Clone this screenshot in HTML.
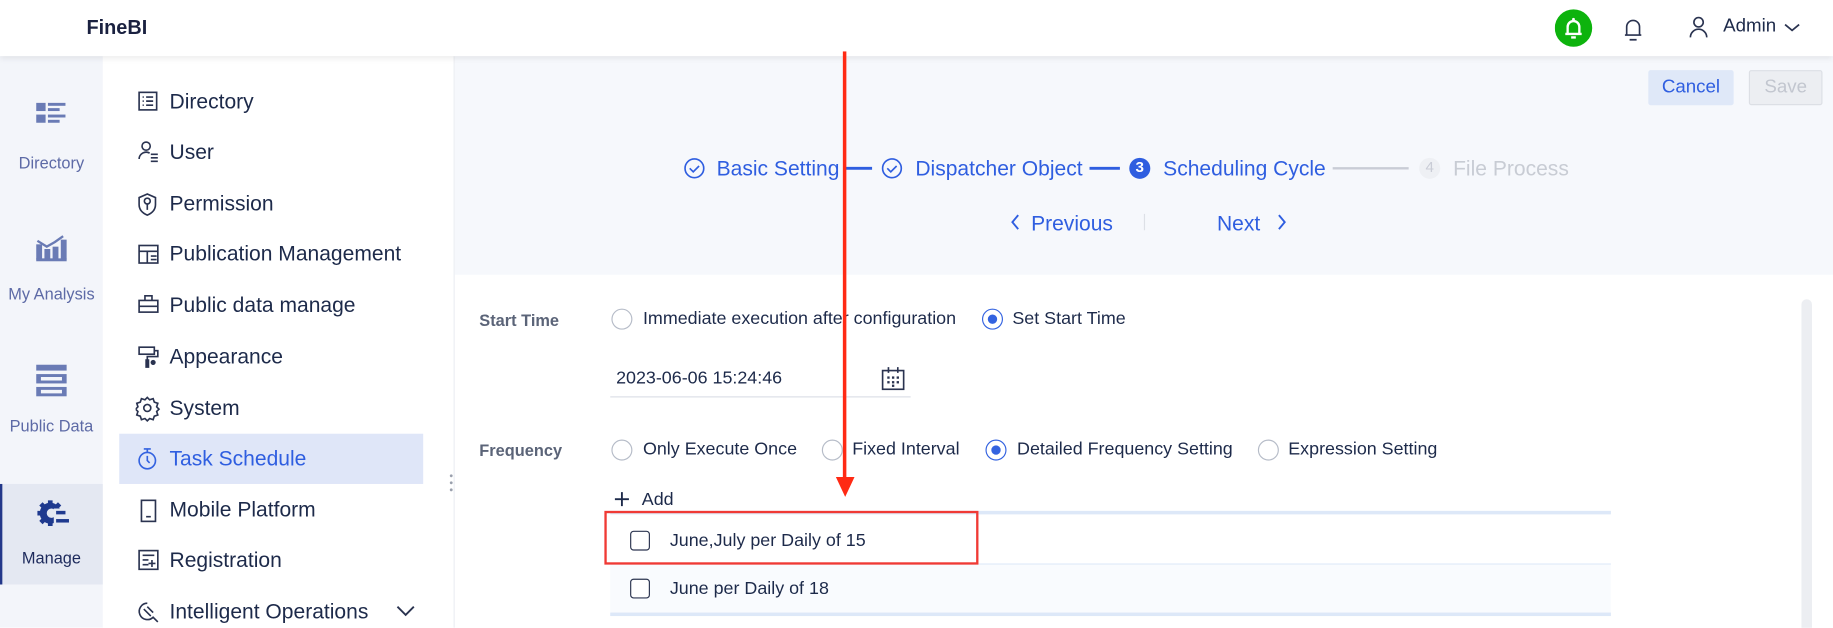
<!DOCTYPE html>
<html><head><meta charset="utf-8"><style>
*{margin:0;padding:0;box-sizing:border-box}
html,body{width:1833px;height:628px;overflow:hidden;background:#fff;font-family:"Liberation Sans",Arial,sans-serif}
#w{position:absolute;left:0;top:0;width:1568px;height:537px;transform:scale(1.16901);transform-origin:0 0;overflow:hidden}
.a{position:absolute;white-space:nowrap}
.nav{font-size:18px;color:#1d2a4a}
.rl{font-size:14px;color:#5d6aa6;width:88px;text-align:center}
.t{font-size:15.3px;color:#1d2a4a}
.rd{position:absolute;width:18px;height:18px;border:1px solid #b6bcc8;border-radius:50%;background:#fff}
.rd.on{border-color:#3463e0}
.rd.on:after{content:"";position:absolute;left:4px;top:4px;width:8px;height:8px;border-radius:50%;background:#3463e0}
.cb{position:absolute;width:17px;height:17px;border:1px solid #2c3550;border-radius:3px;background:#fff}
.st{font-size:18px;color:#2f5ee0}
</style></head><body><div id="w">
<div class="a" style="left:389px;top:48px;width:1179px;height:187px;background:#f6f8fc"></div>
<div class="a" style="left:0;top:0;width:1568px;height:48px;background:#fff;box-shadow:0 2px 5px rgba(0,0,0,.08);z-index:2"></div>
<div class="a" style="left:74px;top:14px;font-size:17px;font-weight:bold;color:#1a2140;z-index:3">FineBI</div>
<svg class="a" style="left:1330px;top:7px;z-index:3" width="240" height="34">
<circle cx="16" cy="17" r="16" fill="#0db30d"/>
<path d="M9 22 h14 M11 22 v-6 a5 5 0 0 1 10 0 v6" stroke="#fff" stroke-width="2" fill="none"/><path d="M14 25 h4" stroke="#fff" stroke-width="2"/><circle cx="16" cy="9.5" r="1.2" fill="#fff"/>
<path d="M60 23 h14 M61.5 23 v-7 a5.5 5.5 0 0 1 11 0 v7 M64 27 h6" stroke="#2a3350" stroke-width="1.4" fill="none"/>
<circle cx="123" cy="12" r="4" stroke="#2a3350" stroke-width="1.4" fill="none"/><path d="M116 25 a7 7 0 0 1 14 0" stroke="#2a3350" stroke-width="1.4" fill="none"/>
<path d="M197 14 l6 5 l6 -5" stroke="#2a3350" stroke-width="1.5" fill="none"/>
</svg>
<div class="a" style="left:1474px;top:14px;font-size:16px;color:#1d2a4a;z-index:3">Admin</div>
<div class="a" style="left:0;top:48px;width:88px;height:489px;background:#f3f5fa"></div>
<div class="a" style="left:0;top:414px;width:88px;height:86px;background:#e4e8f2;border-left:2px solid #23388a"></div>
<svg class="a" style="left:29px;top:86px" width="32" height="60"><g fill="#6a7bb5"><rect x="2" y="2" width="8" height="7"/><rect x="2" y="12" width="8" height="7"/><rect x="12" y="2" width="15" height="2.5"/><rect x="12" y="6.5" width="10" height="2.5"/><rect x="12" y="12" width="15" height="2.5"/><rect x="12" y="16.5" width="10" height="2.5"/></g></svg>
<div class="a rl" style="left:0;top:131px">Directory</div>
<svg class="a" style="left:29px;top:198px" width="32" height="32"><g fill="#6a7bb5"><rect x="2" y="11" width="5" height="13"/><rect x="9" y="15" width="5" height="9"/><rect x="16" y="13" width="5" height="11"/><rect x="23" y="7" width="5" height="17"/><rect x="2" y="23" width="26" height="2.5"/></g><path d="M3 8 l8 5 l7 -4 l7 -5" stroke="#6a7bb5" stroke-width="2" fill="none"/></svg>
<div class="a rl" style="left:0;top:243px">My Analysis</div>
<svg class="a" style="left:29px;top:310px" width="32" height="32"><g fill="#6a7bb5"><rect x="2" y="2" width="26" height="5"/><rect x="2" y="10" width="26" height="8"/><rect x="2" y="21" width="26" height="8"/></g><rect x="6" y="12.5" width="18" height="3" fill="#f3f5fa"/><rect x="6" y="23.5" width="18" height="3" fill="#f3f5fa"/></svg>
<div class="a rl" style="left:0;top:356px">Public Data</div>
<svg class="a" style="left:30px;top:425px" width="30" height="30"><circle cx="13" cy="14" r="9" fill="#1f3a8f"/><g stroke="#1f3a8f" stroke-width="4"><path d="M13 3v22M2 14h22M5 6l16 16M21 6L5 22"/></g><circle cx="14" cy="14" r="4" fill="#e4e8f2"/><rect x="16" y="10" width="12" height="14" fill="#e4e8f2"/><rect x="18" y="12" width="8" height="3" fill="#1f3a8f"/><rect x="18" y="19" width="11" height="3" fill="#1f3a8f"/></svg>
<div class="a rl" style="left:0;top:469px;color:#1d2a5c">Manage</div>
<div class="a" style="left:88px;top:48px;width:301px;height:489px;background:#fff;border-right:1px solid #eceef3"></div>
<div class="a" style="left:102px;top:371px;width:260px;height:43px;background:#dfe6f8"></div>
<svg class="a" style="left:116px;top:76px" width="24" height="460" fill="none" stroke="#2a3350" stroke-width="1.4">
<rect x="3" y="3" width="15" height="15"/><path d="M6 7h1M9 7h6M6 10.5h1M9 10.5h6M6 14h1M9 14h6"/>
<circle cx="9" cy="49" r="3.5"/><path d="M3 60 a6 6 0 0 1 9-5 M13 56h6M13 59h6M13 62h6"/>
<path d="M10 90 l7 3 v6 q0 6 -7 9 q-7 -3 -7 -9 v-6z"/><circle cx="10" cy="96" r="2.5"/><path d="M10 98.5v5"/>
<rect x="3" y="134" width="16" height="15"/><path d="M3 139h16M10 139v10M13 143h5M13 146h5"/>
<rect x="3" y="181" width="16" height="10"/><path d="M8 181v-4h6v4M3 186h16"/>
<rect x="3" y="221" width="13" height="6"/><path d="M16 224h3v5h-9v3"/><rect x="9" y="232" width="2" height="6" fill="#2a3350"/><circle cx="15" cy="234" r="1.5" fill="#2a3350"/>
<circle cx="10" cy="273" r="3"/><path d="M10 264 l2 2 3-1 1 3 3 1 -1 3 2 2-2 2 1 3-3 1-1 3-3-1-2 2-2-2-3 1-1-3-3-1 1-3-2-2 2-2-1-3 3-1 1-3 3 1z"/>
<g stroke="#3463e0"><circle cx="10" cy="318" r="7"/><path d="M10 314v4l2 2M7 308h6M10 308v3"/></g>
<rect x="5" y="352" width="12" height="18"/><path d="M9 366h4"/>
<rect x="3" y="395" width="16" height="16"/><path d="M6 399h10M6 403h5M6 407h5M14 403v6M11 406h6"/>
<path d="M10 440 a7 7 0 1 0 5 12 l4 4"/><path d="M7 445l6 6M10 443l5 5"/>
</svg>
<div class="a nav" style="left:145px;top:77px">Directory</div>
<div class="a nav" style="left:145px;top:120px">User</div>
<div class="a nav" style="left:145px;top:164px">Permission</div>
<div class="a nav" style="left:145px;top:207px">Publication Management</div>
<div class="a nav" style="left:145px;top:251px">Public data manage</div>
<div class="a nav" style="left:145px;top:295px">Appearance</div>
<div class="a nav" style="left:145px;top:339px">System</div>
<div class="a nav" style="left:145px;top:382px;color:#2f5ee0">Task Schedule</div>
<div class="a nav" style="left:145px;top:426px">Mobile Platform</div>
<div class="a nav" style="left:145px;top:469px">Registration</div>
<div class="a nav" style="left:145px;top:513px">Intelligent Operations</div>
<svg class="a" style="left:338px;top:516px" width="20" height="14"><path d="M2 3l7 7 7-7" stroke="#2a3350" stroke-width="1.6" fill="none"/></svg>
<svg class="a" style="left:383px;top:404px" width="6" height="20"><circle cx="3" cy="3" r="1.2" fill="#9aa0ad"/><circle cx="3" cy="9" r="1.2" fill="#9aa0ad"/><circle cx="3" cy="15" r="1.2" fill="#9aa0ad"/></svg>
<div class="a" style="left:1410px;top:60px;width:73px;height:30px;background:#dfe8f8;border-radius:2px;color:#2f5ee0;font-size:16px;text-align:center;line-height:30px">Cancel</div>
<div class="a" style="left:1496px;top:60px;width:63px;height:30px;background:#eceef2;border:1px solid #dcdfe5;border-radius:2px;color:#c2c6cf;font-size:16px;text-align:center;line-height:28px">Save</div>
<svg class="a" style="left:580px;top:131px" width="780" height="80" fill="none">
<g stroke="#2f5ee0" stroke-width="1.4"><circle cx="14" cy="13" r="8"/><path d="M10 13l3 3 5-5"/><circle cx="183" cy="13" r="8"/><path d="M179 13l3 3 5-5"/></g>
<path d="M142 13h24M352 13h26" stroke="#2f5ee0" stroke-width="2.5"/>
<circle cx="395" cy="13" r="9" fill="#2f5ee0"/>
<path d="M560 13h65" stroke="#c9ccd6" stroke-width="2"/>
<circle cx="643" cy="13" r="9" fill="#eef0f4"/>
<path d="M291 53l-5 6 5 6M514 53l5 6-5 6" stroke="#2f5ee0" stroke-width="1.6"/>
<path d="M399 52v14" stroke="#dde0e6"/>
</svg>
<div class="a" style="left:970px;top:135px;width:10px;font-size:13px;font-weight:bold;color:#fff;text-align:center">3</div>
<div class="a" style="left:1218px;top:135px;width:10px;font-size:13px;color:#c9ccd6;text-align:center">4</div>
<div class="a st" style="left:613px;top:134px">Basic Setting</div>
<div class="a st" style="left:783px;top:134px">Dispatcher Object</div>
<div class="a st" style="left:995px;top:134px">Scheduling Cycle</div>
<div class="a st" style="left:1243px;top:134px;color:#c8ccd4">File Process</div>
<div class="a st" style="left:882px;top:181px">Previous</div>
<div class="a st" style="left:1041px;top:181px">Next</div>
<div class="a" style="left:410px;top:266px;font-size:14px;font-weight:bold;color:#5b6478">Start Time</div>
<div class="rd" style="left:523px;top:264px"></div><div class="a t" style="left:550px;top:264px">Immediate execution after configuration</div>
<div class="rd on" style="left:840px;top:264px"></div><div class="a t" style="left:866px;top:264px">Set Start Time</div>
<div class="a" style="left:522px;top:339px;width:257px;height:1px;background:#dcdfe6"></div>
<div class="a t" style="left:527px;top:315px">2023-06-06 15:24:46</div>
<svg class="a" style="left:753px;top:313px" width="22" height="22" fill="none" stroke="#2a3350" stroke-width="1.4"><rect x="2" y="4" width="18" height="16"/><path d="M7 1v5M15 1v5"/><g fill="#2a3350" stroke="none"><rect x="6" y="9" width="2" height="2"/><rect x="10" y="9" width="2" height="2"/><rect x="14" y="9" width="2" height="2"/><rect x="6" y="13" width="2" height="2"/><rect x="10" y="13" width="2" height="2"/><rect x="14" y="13" width="2" height="2"/><rect x="10" y="16" width="2" height="2"/></g></svg>
<div class="a" style="left:410px;top:377px;font-size:14px;font-weight:bold;color:#5b6478">Frequency</div>
<div class="rd" style="left:523px;top:376px"></div><div class="a t" style="left:550px;top:376px">Only Execute Once</div>
<div class="rd" style="left:703px;top:376px"></div><div class="a t" style="left:729px;top:376px">Fixed Interval</div>
<div class="rd on" style="left:843px;top:376px"></div><div class="a t" style="left:870px;top:376px">Detailed Frequency Setting</div>
<div class="rd" style="left:1076px;top:376px"></div><div class="a t" style="left:1102px;top:376px">Expression Setting</div>
<svg class="a" style="left:524px;top:419px" width="16" height="16"><path d="M8 2v12M2 8h12" stroke="#1d2a4a" stroke-width="1.6"/></svg>
<div class="a t" style="left:549px;top:419px">Add</div>
<div class="a" style="left:522px;top:437px;width:856px;height:3px;background:#dde8f8"></div>
<div class="a" style="left:522px;top:482px;width:856px;height:1px;background:#dde8f8"></div>
<div class="a" style="left:522px;top:483px;width:856px;height:41px;background:#f9fbfe"></div>
<div class="a" style="left:522px;top:524px;width:856px;height:3px;background:#dde8f8"></div>
<div class="cb" style="left:539px;top:454px"></div><div class="a t" style="left:573px;top:454px">June,July per Daily of 15</div>
<div class="cb" style="left:539px;top:495px"></div><div class="a t" style="left:573px;top:495px">June per Daily of 18</div>
<div class="a" style="left:517px;top:437px;width:320px;height:46px;border:2px solid #f03a35"></div>
<div class="a" style="left:1541px;top:256px;width:9px;height:290px;background:#eceef2;border-radius:5px"></div>
<div class="a" style="left:721px;top:44px;width:3px;height:370px;background:#ff2a14;z-index:5"></div>
<svg class="a" style="left:715px;top:408px;z-index:5" width="16" height="18"><path d="M0 0h16l-8 17z" fill="#ff2a14"/></svg>
</div></body></html>
